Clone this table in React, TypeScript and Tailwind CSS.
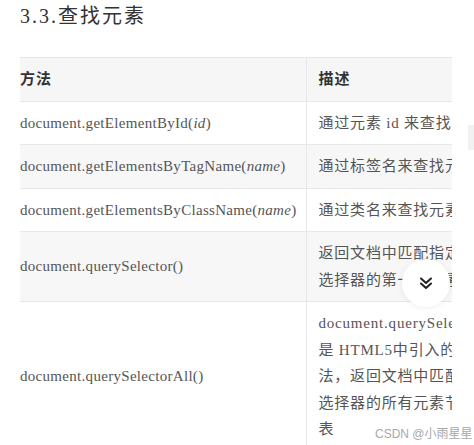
import React from 'react';

type Row = { method: React.ReactNode; desc: string[] };

const serif = { fontFamily: '"Liberation Serif", "Noto Sans CJK SC", serif' };

const rows: Row[] = [
    { method: <>document.getElementById(<i>id</i>)</>, desc: ['通过元素 id 来查找元素'] },
    { method: <>document.getElementsByTagName(<i>name</i>)</>, desc: ['通过标签名来查找元素'] },
    { method: <>document.getElementsByClassName(<i>name</i>)</>, desc: ['通过类名来查找元素'] },
    { method: <>document.querySelector()</>, desc: ['返回文档中匹配指定的CSS', '选择器的第一个元素'] },
    {
        method: <>document.querySelectorAll()</>,
        desc: ['document.querySelectorAll()', '是 HTML5中引入的新方', '法，返回文档中匹配的CSS', '选择器的所有元素节点列', '表'],
    },
];

const App: React.FC = () => {
    return (
        <div className="relative w-[474px] h-[445px] bg-white overflow-hidden text-[#555]" style={serif}>
            <h3 className="pl-[20px] pt-[2px] h-[57px] text-[20px] leading-[28px] tracking-[2px] text-[#333] font-normal">3.3.查找元素</h3>

            <div className="ml-[20px] w-[432px] overflow-hidden">
                <table className="-ml-[12px] w-[618px] table-fixed border-collapse text-[15px] leading-[26.5px]">
                    <colgroup>
                        <col className="w-[298px]" />
                        <col className="w-[320px]" />
                    </colgroup>
                    <thead>
                        <tr className="bg-[#f6f6f6] border-t border-[#e6e6e6]">
                            <th className="px-3 py-2 text-left font-bold text-[#333] tracking-[1px] border-b border-[#e8e8e8]">方法</th>
                            <th className="px-3 py-2 text-left font-bold text-[#333] tracking-[1px] border-b border-l border-[#e8e8e8]">描述</th>
                        </tr>
                    </thead>
                    <tbody>
                        {rows.map((r, i) => (
                            <tr key={i} className={i % 2 === 1 ? 'bg-[#f7f7f7]' : 'bg-white'}>
                                <td className="px-3 py-2 whitespace-nowrap overflow-hidden tracking-[0.3px] border-b border-[#e8e8e8]">{r.method}</td>
                                <td className="px-3 py-2 whitespace-nowrap overflow-hidden align-top tracking-[0.8px] border-b border-l border-[#e8e8e8]">
                                    {r.desc.map((line, j) => (
                                        <div key={j}>{line}</div>
                                    ))}
                                </td>
                            </tr>
                        ))}
                    </tbody>
                </table>
            </div>

            {/* faint scroll marker */}
            <div className="absolute left-[468px] top-[125px] w-[6px] h-[25px] bg-[#f1f1f1]" />

            {/* back-to-bottom button */}
            <div className="absolute left-[402px] top-[259px] w-12 h-12 rounded-full bg-white shadow-[0_1px_6px_rgba(0,0,0,0.07)] flex items-center justify-center">
                <svg width="16" height="16" viewBox="0 0 16 16" fill="none" stroke="#222" strokeWidth="2" strokeLinecap="round" strokeLinejoin="round">
                    <path d="M3 3.5 L8 8 L13 3.5" />
                    <path d="M3 8.5 L8 13 L13 8.5" />
                </svg>
            </div>

            <div className="absolute left-[375px] top-[425px] text-[12px] leading-[18px] text-[#a8a8a8]" style={{ fontFamily: '"Liberation Sans", "Noto Sans CJK SC", sans-serif' }}>
                CSDN @小雨星星
            </div>
        </div>
    );
};

export default App;
